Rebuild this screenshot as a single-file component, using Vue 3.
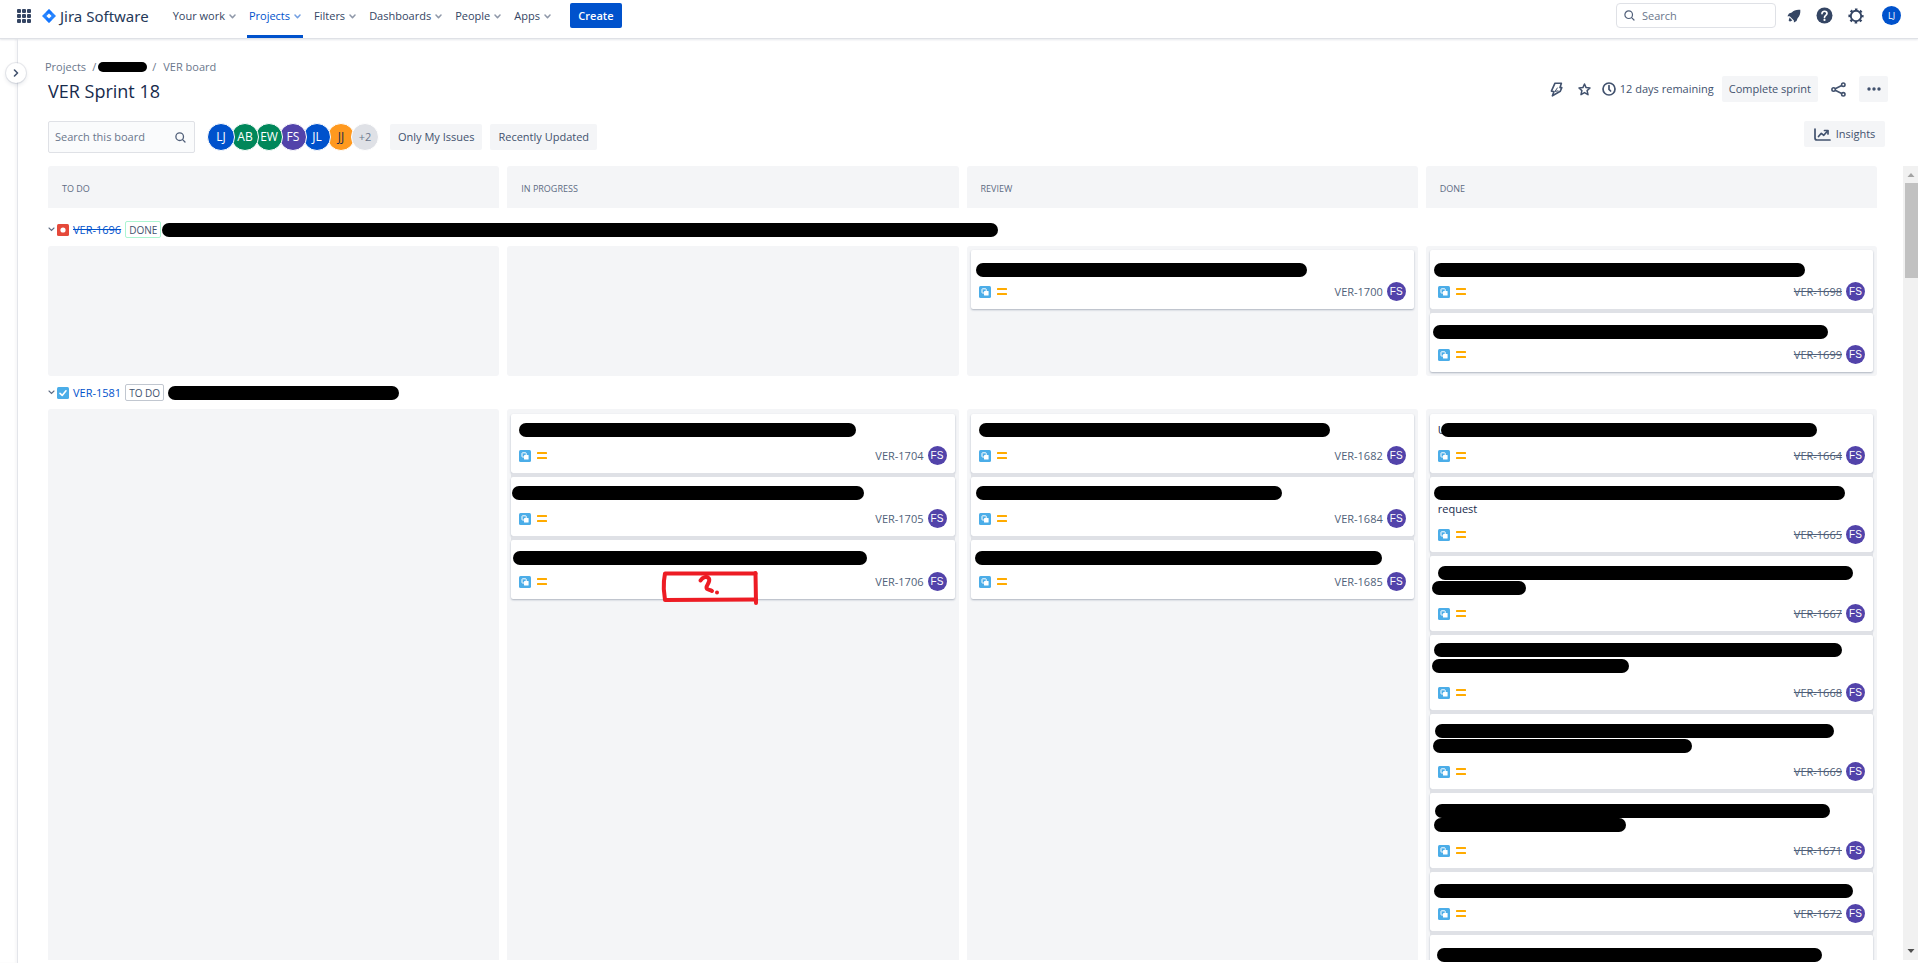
<script setup>
const nav = [
  { label: 'Your work' },
  { label: 'Projects', active: true },
  { label: 'Filters' },
  { label: 'Dashboards' },
  { label: 'People' },
  { label: 'Apps' },
]

const people = [
  { initials: 'LJ', tone: 'blue' },
  { initials: 'AB', tone: 'green' },
  { initials: 'EW', tone: 'green' },
  { initials: 'FS', tone: 'purple' },
  { initials: 'JL', tone: 'blue' },
  { initials: 'JJ', tone: 'orange' },
]

const columns = ['To Do', 'In Progress', 'Review', 'Done']

// Each mask is [left, top, width] inside its card.
const lanes = [
  {
    key: 'VER-1696', status: 'DONE', done: true, icon: 'bug', mask: 836,
    columns: [
      [],
      [],
      [{ key: 'VER-1700', masks: [[5, 13, 331]] }],
      [
        { key: 'VER-1698', done: true, masks: [[4, 13, 371]] },
        { key: 'VER-1699', done: true, masks: [[3, 12, 395]] },
      ],
    ],
  },
  {
    key: 'VER-1581', status: 'TO DO', done: false, icon: 'task', mask: 231,
    columns: [
      [],
      [
        { key: 'VER-1704', masks: [[8, 9, 337]] },
        { key: 'VER-1705', masks: [[1, 9, 352]] },
        { key: 'VER-1706', masks: [[2, 11, 354]], note: true },
      ],
      [
        { key: 'VER-1682', masks: [[8, 9, 351]] },
        { key: 'VER-1684', masks: [[5, 9, 306]] },
        { key: 'VER-1685', masks: [[4, 11, 407]] },
      ],
      [
        { key: 'VER-1664', done: true, text: 'U', masks: [[11, 9, 376]] },
        { key: 'VER-1665', done: true, tail: 'request', masks: [[4, 9, 411]] },
        { key: 'VER-1667', done: true, long: true, masks: [[8, 10, 415], [2, 25, 94]] },
        { key: 'VER-1668', done: true, long: true, masks: [[4, 8, 408], [2, 24, 197]] },
        { key: 'VER-1669', done: true, long: true, masks: [[5, 10, 399], [3, 25, 259]] },
        { key: 'VER-1671', done: true, long: true, masks: [[5, 11, 395], [4, 25, 192]] },
        { key: 'VER-1672', done: true, masks: [[4, 12, 419]] },
        { key: '', long: true, masks: [[7, 13, 385]] },
      ],
    ],
  },
]

const maskStyle = ([left, top, width]) => ({ left: left + 'px', top: top + 'px', width: width + 'px' })
</script>

<template>
  <div class="app">
    <header class="topbar">
      <button class="icon-btn switcher" aria-label="Switch to">
        <svg width="14" height="14" viewBox="0 0 14 14" fill="#344563">
          <template v-for="r in 3" :key="r">
            <rect v-for="c in 3" :key="c" :x="(c - 1) * 5" :y="(r - 1) * 5" width="4" height="4" rx="1" />
          </template>
        </svg>
      </button>
      <a class="logo" href="#">
        <svg width="14" height="14" viewBox="0 0 14 14">
          <path d="M7 0 L14 7 L7 14 L0 7 Z" fill="#2684ff" />
          <path d="M7 0 L10 3 Q10 6 7 4.600 Q4 3.500 4 3 Z M7 14 L4 11 Q4 8 7 9.400 Q10 10.500 10 11 Z" fill="#0065ff" opacity=".45" />
          <path d="M7 4.400 L9.600 7 L7 9.600 L4.400 7 Z" fill="#fff" />
        </svg>
        <span>Jira Software</span>
      </a>
      <nav class="menu">
        <button v-for="n in nav" :key="n.label" class="menu-item" :class="{ active: n.active }">
          {{ n.label }}
          <svg width="7" height="5" viewBox="0 0 7 5" fill="none" stroke="currentColor" stroke-width="1.5" stroke-linecap="round" stroke-linejoin="round" opacity=".55"><path d="M1 1 L3.500 3.700 L6 1" /></svg>
        </button>
      </nav>
      <button class="create">Create</button>
      <label class="search">
        <svg width="11" height="11" viewBox="0 0 11 11" fill="none" stroke="#505f79" stroke-width="1.200" stroke-linecap="round"><circle cx="4.700" cy="4.700" r="3.800" /><path d="M7.600 7.600 L10 10" /></svg>
        <input type="text" placeholder="Search" aria-label="Search" />
      </label>
      <div class="tools">
        <button class="icon-btn" aria-label="Notifications">
          <svg width="14" height="14" viewBox="0 0 14 14" fill="#344563"><path d="M13.300 .8 C9.500 .4 6.800 1.200 4.800 3.400 L2 4.600 L.4 7.300 L2.700 7.200 L6.900 11.400 L6.900 13.600 L9.500 12 L10.600 9.200 C12.800 7.200 13.600 4.500 13.300 .8 Z" /><path d="M2.600 8.600 L5.400 11.400 L4 12 L2.900 12.800 L2.400 11.900 L1.600 11.500 Z" /></svg>
        </button>
        <button class="icon-btn" aria-label="Help">
          <svg width="17" height="17" viewBox="0 0 17 17"><circle cx="8.500" cy="8.500" r="8" fill="#344563" /><path d="M6 6.600 C6 3.400 11 3.500 11 6.600 C11 8.400 8.500 8.400 8.500 10.400" fill="none" stroke="#fff" stroke-width="1.700" stroke-linecap="round" /><circle cx="8.500" cy="12.900" r="1.100" fill="#fff" /></svg>
        </button>
        <button class="icon-btn" aria-label="Settings">
          <svg width="16" height="16" viewBox="0 0 16 16" fill="none" stroke="#344563"><circle cx="8" cy="8" r="5.200" stroke-width="1.900" /><circle cx="8" cy="8" r="6.600" stroke-width="2" stroke-dasharray="2.500 2.684" stroke-dashoffset="1.250" /></svg>
        </button>
        <button class="avatar small blue" aria-label="Your profile">LJ</button>
      </div>
    </header>

    <div class="body">
      <aside class="rail">
        <button class="expand" aria-label="Expand sidebar">
          <svg width="6" height="8" viewBox="0 0 6 8" fill="none" stroke="#42526e" stroke-width="1.600" stroke-linecap="round" stroke-linejoin="round"><path d="M1.500 1 L4.500 4 L1.500 7" /></svg>
        </button>
      </aside>

      <main class="content">
        <div class="page-head">
          <div>
            <nav class="crumbs" aria-label="Breadcrumb">
              <a href="#">Projects</a><span class="slash">/</span><span class="mask crumb-mask"></span><span class="slash second">/</span><a href="#">VER board</a>
            </nav>
            <h1>VER Sprint 18</h1>
          </div>
          <div class="actions">
            <button class="icon-btn" aria-label="Automation">
              <svg width="13" height="15" viewBox="0 0 13 15" fill="none" stroke="#42526e" stroke-width="1.600" stroke-linejoin="round"><path d="M5 1.200 L11.400 1.200 L10 5.600 L11.800 5.600 L10.300 9.200 L2.400 13.800 L4 9.500 L1.400 9.200 Z" /><path d="M7.600 5.600 L5 9.400 L8.400 8.800" stroke-width="1" /></svg>
            </button>
            <button class="icon-btn star" aria-label="Star board">
              <svg width="13" height="13" viewBox="0 0 13 13" fill="none" stroke="#42526e" stroke-width="1.500" stroke-linejoin="round"><path d="M6.500 1 L8.100 4.600 L12 5 L9.100 7.600 L10 11.700 L6.500 9.600 L3 11.700 L3.900 7.600 L1 5 L4.900 4.600 Z" /></svg>
            </button>
            <span class="remaining">
              <svg width="14" height="14" viewBox="0 0 14 14" fill="none" stroke="#42526e" stroke-width="1.700" stroke-linecap="round"><circle cx="7" cy="7" r="6" /><path d="M7 3.500 L7 7.400 L8.600 9" /></svg>
              12 days remaining
            </span>
            <button class="btn regular">Complete sprint</button>
            <button class="icon-btn share" aria-label="Share">
              <svg width="15" height="15" viewBox="0 0 15 15" fill="none" stroke="#42526e" stroke-width="1.600"><circle cx="2.600" cy="7.500" r="1.700" /><circle cx="12.300" cy="2.700" r="1.700" /><circle cx="12.300" cy="12.300" r="1.700" /><path d="M4.200 6.700 L10.700 3.500 M4.200 8.300 L10.700 11.500" /></svg>
            </button>
            <button class="btn more" aria-label="More actions">
              <svg width="14" height="4" viewBox="0 0 14 4" fill="#42526e"><circle cx="2" cy="2" r="1.700" /><circle cx="7" cy="2" r="1.700" /><circle cx="12" cy="2" r="1.700" /></svg>
            </button>
          </div>
        </div>

        <div class="filters">
          <label class="board-search">
            <input type="text" placeholder="Search this board" aria-label="Search this board" />
            <svg width="11" height="11" viewBox="0 0 11 11" fill="none" stroke="#505f79" stroke-width="1.300" stroke-linecap="round"><circle cx="4.700" cy="4.700" r="3.800" /><path d="M7.600 7.600 L10 10" /></svg>
          </label>
          <div class="people">
            <button v-for="(p, i) in people" :key="p.initials" class="avatar large" :class="p.tone" :style="{ zIndex: people.length - i }">{{ p.initials }}</button>
            <button class="avatar large rest">+2</button>
          </div>
          <button class="btn">Only My Issues</button>
          <button class="btn">Recently Updated</button>
          <button class="btn insights">
            <svg width="17" height="13" viewBox="0 0 17 13" fill="none" stroke="#42526e" stroke-width="1.700" stroke-linecap="round" stroke-linejoin="round"><path d="M1 1 L1 10 Q1 12 3 12 L16 12" /><path d="M4.500 8.500 L7.300 5.300 L9.800 7.300 L13.500 3" /><path d="M10.500 2.500 L14 2.500 L14 6" /></svg>
            Insights
          </button>
        </div>

        <div class="pane">
          <div class="board">
            <div class="grid">
              <h2 v-for="c in columns" :key="c" class="col-head">{{ c }}</h2>
            </div>
            <section v-for="lane in lanes" :key="lane.key" class="lane">
              <div class="lane-head" :class="lane.icon">
                <button class="icon-btn" aria-label="Toggle swimlane">
                  <svg width="7" height="5" viewBox="0 0 7 5" fill="none" stroke="#5e6c84" stroke-width="1.100" stroke-linecap="round"><path d="M1 1 L3.500 3.500 L6 1" /></svg>
                </button>
                <svg v-if="lane.icon === 'bug'" class="type" width="12" height="12" viewBox="0 0 12 12"><rect width="12" height="12" rx="1.500" fill="#e5493a" /><circle cx="6" cy="6" r="2.600" fill="#fff" /></svg>
                <svg v-else class="type" width="12" height="12" viewBox="0 0 12 12"><rect width="12" height="12" rx="1.500" fill="#4bade8" /><path d="M3 6.300 L5.200 8.400 L9 3.800" fill="none" stroke="#fff" stroke-width="1.600" stroke-linecap="round" stroke-linejoin="round" /></svg>
                <a href="#" class="lane-key" :class="{ done: lane.done }">{{ lane.key }}</a>
                <span class="status" :class="{ ok: lane.done }">{{ lane.status }}</span>
                <span class="mask" :style="{ width: lane.mask + 'px' }"></span>
              </div>
              <div class="grid">
                <div v-for="(cards, i) in lane.columns" :key="i" class="col">
                  <article v-for="card in cards" :key="card.key" class="card">
                    <p class="summary" :class="{ long: card.long || card.tail }">{{ card.text }}<span v-if="card.tail" class="tail">{{ card.tail }}</span></p>
                    <div v-if="card.key" class="meta">
                      <svg width="12" height="12" viewBox="0 0 12 12"><rect width="12" height="12" rx="1.500" fill="#4bade8" /><rect x="3" y="2.800" width="4.200" height="4.200" rx=".5" fill="none" stroke="#fff" stroke-width="1" /><rect x="5" y="5" width="4.600" height="4.600" rx=".6" fill="#fff" /></svg>
                      <svg width="10" height="8" viewBox="0 0 10 8" fill="#ffab00"><rect y="0" width="10" height="2" rx=".5" /><rect y="5" width="10" height="2" rx=".5" /></svg>
                      <a href="#" class="key" :class="{ done: card.done }">{{ card.key }}</a>
                      <span class="avatar small purple">FS</span>
                    </div>
                    <span v-for="(m, k) in card.masks" :key="k" class="mask over" :style="maskStyle(m)"></span>
                    <svg v-if="card.note" class="note" width="100" height="38" viewBox="0 0 100 38" fill="none" stroke="#ed1c24" stroke-width="4" stroke-linecap="round" stroke-linejoin="round">
                      <path d="M94.500 4.500 L4 4.500 Q2.500 12 2.800 20 L4 31 L95 30.500" />
                      <path d="M94.500 4 L95 34" />
                      <path d="M39.500 11.500 C41.500 8 46 6.500 48 9.500 C49.500 13 45.500 15.500 45.500 18.500 C45.500 21 48.500 20.500 51 22" />
                      <path d="M56 23.500 L56 23.600" />
                    </svg>
                  </article>
                </div>
              </div>
            </section>
          </div>
          <div class="scroll" aria-hidden="true">
            <svg width="15" height="17" viewBox="0 0 15 17"><path d="M4.500 11 L8 7 L11.500 11 Z" fill="#a3a3a3" /></svg>
            <div class="thumb"></div>
            <svg width="15" height="17" viewBox="0 0 15 17"><path d="M4.500 6 L8 10 L11.500 6 Z" fill="#505050" /></svg>
          </div>
        </div>
      </main>
    </div>
  </div>
</template>

<style>
html, body { margin: 0; overflow: hidden; }
</style>

<style scoped>
* { box-sizing: border-box; }
.app {
  height: 100vh;
  display: flex;
  flex-direction: column;
  background: #fff;
  color: #42526e;
  font: 11px/16px "Open Sans", "Noto Sans", sans-serif;
}
button, input { font: inherit; color: inherit; border: 0; padding: 0; margin: 0; background: none; }
button { cursor: pointer; }
a { color: inherit; text-decoration: none; }
svg { flex: none; display: block; }
.icon-btn { display: flex; align-items: center; justify-content: center; flex: none; }

.topbar {
  height: 39px;
  flex: none;
  display: flex;
  align-items: flex-start;
  padding: 3px 17px 0;
  border-bottom: 1px solid #dfe1e6;
  box-shadow: 0 1px 2px rgba(9, 30, 66, .1);
}
.switcher { height: 25px; }
.logo { height: 25px; display: flex; align-items: center; gap: 4px; margin-left: 11px; color: #253858; font: 15px/24px "Noto Sans", sans-serif; white-space: nowrap; }
.menu { display: flex; align-self: stretch; margin-left: 22px; gap: 9px; }
.menu-item {
  display: flex; align-items: flex-start; gap: 4px;
  height: 35px; padding: 5px 2px 0;
  color: #344563; font-weight: 500; white-space: nowrap;
  border-bottom: 3px solid transparent;
}
.menu-item svg { margin-top: 6px; }
.menu-item.active { color: #0052cc; border-color: #0052cc; }
.create { width: 52px; height: 25px; margin-left: 17px; border-radius: 2px; background: #0052cc; color: #fff; font-weight: 600; }
.search {
  display: flex; align-items: center; gap: 7px;
  width: 160px; height: 25px; margin-left: auto; padding: 0 7px;
  border: 1px solid #dfe1e6; border-radius: 4px;
}
input { min-width: 0; flex: 1; outline: none; }
input::placeholder { color: #6b778c; opacity: 1; }
.tools { display: flex; align-items: center; gap: 15px; height: 25px; margin-left: 11px; }

.avatar {
  display: flex; align-items: center; justify-content: center; flex: none;
  border-radius: 50%; color: #fff;
}
.avatar.small { width: 19px; height: 19px; font-size: 9px; }
.avatar.small.purple { font-family: "Liberation Sans", Arial, sans-serif; font-size: 10px; }
.avatar.large { position: relative; width: 28px; height: 28px; margin-right: -4px; border: 1px solid #fff; font-size: 12px; font-weight: 500; }
.blue { background: #0052cc; }
.green { background: #00875a; }
.purple { background: #5243aa; }
.orange { background: #ff991f; color: #172b4d; }
.avatar.rest { z-index: 9; margin-right: 0; background: #dfe1e6; color: #6b778c; font-size: 11px; font-weight: 400; }
.tools .avatar { margin-left: 3px; }

.body { flex: 1; min-height: 0; display: flex; }
.rail { position: relative; width: 18px; flex: none; border-right: 1px solid #e3e5ea; box-shadow: inset -2px 0 2px rgba(9, 30, 66, .03); }
.expand {
  position: absolute; top: 24px; left: 6px; width: 20px; height: 20px; border-radius: 50%;
  display: flex; align-items: center; justify-content: center;
  background: #fff; box-shadow: 0 0 0 1px rgba(9, 30, 66, .08), 0 2px 4px rgba(9, 30, 66, .12);
}
.content { flex: 1; min-width: 0; display: flex; flex-direction: column; padding-left: 30px; }

.page-head { display: flex; justify-content: space-between; align-items: flex-end; padding: 20px 30px 0 0; }
.crumbs { display: flex; align-items: center; margin-left: -3px; color: #6b778c; }
.slash { margin: 0 2px 0 6px; }
.slash.second { margin: 0 7px 0 5px; }
.mask { display: block; flex: none; height: 14px; border-radius: 7px; background: #000; }
.crumb-mask { width: 49px; height: 10px; border-radius: 5px; }
h1 { margin: 3px 0 0; font-size: 18px; line-height: 26px; height: 24px; font-weight: 500; color: #172b4d; }
.actions { display: flex; align-items: center; }
.star { margin-left: 15px; }
.remaining { display: flex; align-items: center; gap: 4px; margin: 0 8px 0 11px; }
.share { margin: 0 13px; }
.btn {
  display: flex; align-items: center; justify-content: center;
  height: 26px; padding: 0 8px; border-radius: 2px;
  background: #f4f5f7; color: #42526e; font-weight: 500; white-space: nowrap;
}
.btn.regular { padding: 0 7px; font-weight: 400; }
.btn.more { width: 29px; }

.filters { display: flex; align-items: center; gap: 8px; margin: 19px 33px 13px 0; }
.board-search {
  display: flex; align-items: center; width: 147px; height: 32px; padding: 0 8px 0 6px;
  border: 1px solid #dfe1e6; border-radius: 2px; background: #fafbfc;
}
.people { display: flex; margin: 0 3px 0 4px; }
.insights { align-self: flex-start; width: 81px; gap: 5px; margin-left: auto; }

.pane { position: relative; flex: 1; min-height: 0; display: flex; overflow: hidden; }
.pane::after { content: ""; position: absolute; left: 0; right: 0; bottom: 0; height: 3px; background: #fff; z-index: 1; }
.board { flex: 1; min-width: 0; padding-right: 26px; display: flex; flex-direction: column; }
.grid { display: grid; grid-template-columns: repeat(4, minmax(0, 1fr)); gap: 8px; }
.col-head {
  margin: 0; height: 42px; padding: 0 14px; line-height: 45px;
  border-radius: 3px 3px 0 0; background: #f4f5f7;
  color: #5e6c84; font-size: 9px; font-weight: 500; text-transform: uppercase;
}
.lane-head { display: flex; align-items: center; height: 38px; padding-top: 5px; }
.lane-head.task { height: 33px; padding-top: 0; }
.type { margin-left: 2px; }
.lane-key { margin-left: 4px; color: #0052cc; }
.done { text-decoration: line-through; }
.status {
  height: 17px; margin: 0 4px; padding: 0 3px; line-height: 16px;
  border: 1px solid #c1c7d0; border-radius: 2px; color: #42526e; font-size: 10px;
}
.status.ok { margin-right: 1px; border-color: #abf5d1; }
.col { display: flex; flex-direction: column; gap: 4px; padding: 4px; border-radius: 3px; background: #f4f5f7; }
.lane + .lane .col { padding-top: 5px; }
.card {
  position: relative; padding: 8px; border-radius: 2px; background: #fff;
  box-shadow: 0 1px 2px rgba(9, 30, 66, .3);
}
.card + .card { box-shadow: 0 -4px 0 #dfe1e6, 0 1px 2px rgba(9, 30, 66, .3); }
.summary { margin: 0 0 8px; height: 16px; color: #172b4d; }
.summary.long { height: 32px; }
.tail { display: block; padding-top: 16px; }
.meta { display: flex; align-items: center; height: 19px; }
.meta svg + svg { margin-left: 6px; }
.key { margin-left: auto; margin-right: 4px; color: #505f79; }
.over { position: absolute; z-index: 2; }
.note { position: absolute; left: 150px; top: 29px; z-index: 3; }

.scroll { width: 15px; flex: none; display: flex; flex-direction: column; background: #f1f1f1; }
.thumb { width: 13px; height: 95px; margin: 0 0 auto 2px; background: #c1c1c1; }
.scroll svg:last-child { margin-bottom: 3px; }
</style>
